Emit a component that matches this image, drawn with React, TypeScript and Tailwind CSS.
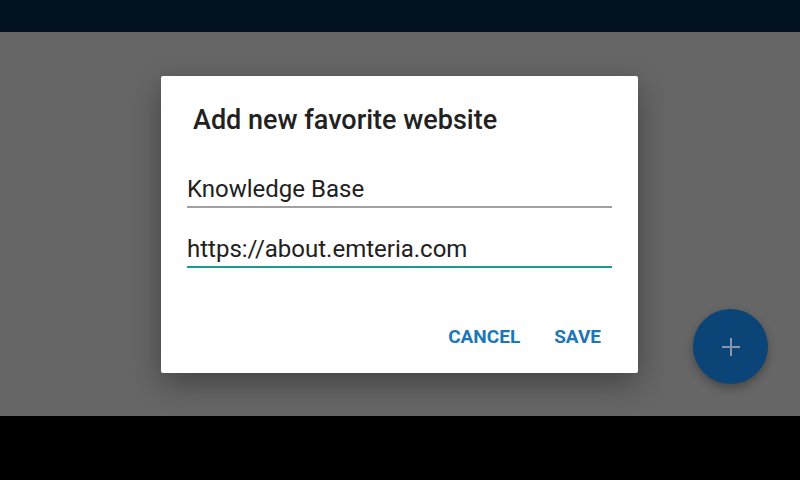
import React from "react";

// add favorite dialog over a dimmed screen
const App = () => {
  return (
    <div
      className="w-[800px] h-[480px] flex flex-col overflow-hidden"
      style={{ fontFamily: "Roboto, 'Liberation Sans', sans-serif" }}
    >
      {/* status bar */}
      <div className="h-8 bg-[#021220]" />

      {/* dimmed content */}
      <div className="relative flex-1 bg-[#666666] flex items-center justify-center">
        <div className="w-[477px] h-[297px] mr-px bg-white rounded-[2px] shadow-[0_10px_30px_rgba(0,0,0,0.35)] flex flex-col">
          <h2 className="pl-8 pt-[28px] text-[27px] leading-8 font-medium text-[#212121]">
            Add new favorite website
          </h2>

          <div className="px-[26px] mt-[39px]">
            <div className="border-b-[2px] border-[#a0a0a0] pb-[3px]">
              <span className="block text-[24px] leading-7 text-[#212121]">
                Knowledge Base
              </span>
            </div>
            <div className="mt-[27px] border-b-[2px] border-[#1d9a92] pb-[3px]">
              <span className="block text-[24px] leading-7 text-[#212121]">
                https://about.emteria.com
              </span>
            </div>
          </div>

          <div className="mt-auto mb-[24px] pr-[37px] flex justify-end gap-[34px]">
            <button className="text-[19px] leading-6 font-bold text-[#1b77b6]">
              CANCEL
            </button>
            <button className="text-[19px] leading-6 font-bold text-[#1b77b6]">
              SAVE
            </button>
          </div>
        </div>

        {/* floating add button */}
        <div className="absolute right-8 bottom-8 w-[75px] h-[75px] rounded-full bg-[#0b4477] shadow-[0_4px_10px_rgba(0,0,0,0.3)] flex items-center justify-center">
          <svg width="20" height="20" viewBox="0 0 20 20">
            <path d="M10 1v18M1 10h18" stroke="#8796a8" strokeWidth="2" />
          </svg>
        </div>
      </div>

      {/* nav bar */}
      <div className="h-16 bg-black" />
    </div>
  );
};

export default App;
